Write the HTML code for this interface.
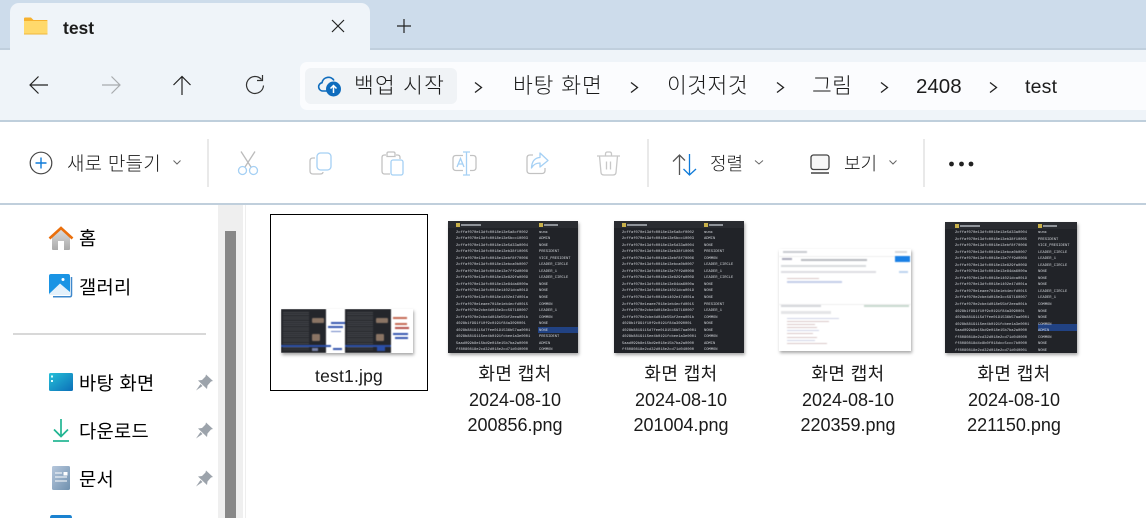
<!DOCTYPE html>
<html lang="ko"><head><meta charset="utf-8"><title>test</title>
<style>
html,body{margin:0;padding:0;width:1146px;height:518px;overflow:hidden;background:#fff}
body{position:relative;font-family:"Liberation Sans","Noto Sans CJK KR",sans-serif;color:#1a1a1a}
.a{position:absolute}
.t{position:absolute;white-space:nowrap;line-height:30px;height:30px}
.k{font-family:"Noto Sans CJK KR","Liberation Sans",sans-serif;font-weight:300}
.n{font-size:21.5px}
.b{font-size:18px}
.s{font-size:18.7px;color:#000;font-weight:400;letter-spacing:.3px}
.l{position:absolute;width:166px;text-align:center;font-size:18px;line-height:25.5px;color:#1a1a1a}
.l .k{font-weight:400;letter-spacing:.4px}
svg{position:absolute;overflow:visible}
.th{position:absolute;background:#212328;box-shadow:1px 2px 3px rgba(0,0,0,.35);overflow:hidden;width:130px;height:132px}
.th pre{position:absolute;margin:0;font:3.75px/6.55px "Liberation Mono",monospace;color:#d0d3d8;filter:blur(.35px)}
.th .hd{position:absolute;left:0;top:0;width:100%;height:7px;background:#2a2c31}
.th .hl{position:absolute;height:6.5px;background:#214283}
.th .i1,.th .i2{position:absolute;top:2px;width:3.5px;height:3.5px;background:#c8b04a}
.th .h1,.th .h2{position:absolute;top:3px;height:1.5px;background:#8f9399;filter:blur(.3px)}
</style></head><body>
<!-- tab strip -->
<div class="a" style="left:0;top:0;width:1146px;height:50px;background:#cddceb"></div>
<div class="a" style="left:0;top:48px;width:1146px;height:2px;background:#c0cfdd"></div>
<div class="a" style="left:10px;top:3px;width:360px;height:47px;background:#eff4f9;border-radius:9px 9px 0 0"></div>
<div class="a" style="left:0;top:50px;width:1146px;height:70px;background:#eff4f9"></div>
<div class="a" style="left:0;top:120px;width:1146px;height:2px;background:#bfcfdc"></div>
<svg style="left:24px;top:17px" width="24" height="18" viewBox="0 0 24 18"><path d="M0 1.500Q0 .5 1 .5H7L9.500 3H23Q23.500 3 23.500 4V6H0Z" fill="#f6b12e"/><path d="M0 4H23.500V16.500Q23.500 17.500 22.500 17.500H1Q0 17.500 0 16.500Z" fill="#ffd96b"/><path d="M0 17H23.500" stroke="#efb63c"/></svg>
<div class="t" style="left:63px;top:13px;font-size:17.500px;font-weight:700;color:#1c1c1c">test</div>
<svg style="left:330px;top:18px" width="16" height="16" fill="none" stroke="#222" stroke-width="1.200"><path d="M2 2L14 14M14 2L2 14"/></svg>
<svg style="left:396px;top:18px" width="16" height="16" fill="none" stroke="#222" stroke-width="1.200"><path d="M8 1V15M1 8H15"/></svg>
<!-- nav -->
<svg style="left:29px;top:75px" width="20" height="20" fill="none" stroke="#222" stroke-width="1.200"><path d="M1 10H19M9.500 1.500L1 10L9.500 18.500"/></svg>
<svg style="left:101px;top:75px" width="20" height="20" fill="none" stroke="#a8abae" stroke-width="1.200"><path d="M1 10H19M10.500 1.500L19 10L10.500 18.500"/></svg>
<svg style="left:172px;top:75px" width="20" height="20" fill="none" stroke="#222" stroke-width="1.200"><path d="M10 20V1.500M1.500 10L10 1.500L18.500 10"/></svg>
<svg style="left:245px;top:75px" width="20" height="21" fill="none" stroke="#333" stroke-width="1.200"><path d="M16.500 4.500A8.500 8.500 0 1 0 18.500 10.500M17.500 0V5.500H12"/></svg>
<div class="a" style="left:300px;top:62px;width:846px;height:48px;background:#fbfcfe;border-radius:7px 0 0 7px"></div>
<div class="a" style="left:305px;top:68px;width:152px;height:36px;background:#f0f3f6;border-radius:6px"></div>
<svg style="left:317px;top:74px" width="26" height="24" viewBox="0 0 26 24"><path d="M10 17H5.500A4.200 4.200 0 0 1 5 8.700A6.500 6.500 0 0 1 17 6.500" fill="none" stroke="#0f6cbd" stroke-width="1.600"/><circle cx="16.500" cy="15" r="7.500" fill="#0f6cbd"/><path d="M16.500 19V11.500M13.500 14.500L16.500 11.500L19.500 14.500" fill="none" stroke="#fff" stroke-width="1.500"/></svg>
<div class="t k n" style="left:354px;top:70px;letter-spacing:1.200px">백업 시작</div>
<div class="t k n" style="left:513px;top:70px;letter-spacing:.9px">바탕 화면</div>
<div class="t k n" style="left:667px;top:70px;letter-spacing:.5px">이것저것</div>
<div class="t k n" style="left:812px;top:70px;letter-spacing:.3px">그림</div>
<div class="t" style="left:916px;top:72px;font-size:20.500px;color:#1c1c1c">2408</div>
<div class="t" style="left:1025px;top:72px;font-size:19.500px;color:#1c1c1c;letter-spacing:.2px">test</div>
<svg style="left:0;top:0" width="1146" height="120" fill="none" stroke="#222" stroke-width="1.300"><path d="M475 82.500L481.500 87.500L475 92.500M631 82.500L637.500 87.500L631 92.500M777 82.500L783.500 87.500L777 92.500M881 82.500L887.500 87.500L881 92.500M990 82.500L996.500 87.500L990 92.500"/></svg>
<!-- toolbar -->
<svg style="left:29px;top:151px" width="24" height="24" fill="none"><circle cx="12" cy="12" r="10.800" stroke="#444" stroke-width="1.200"/><path d="M12 6.500V17.500M6.500 12H17.500" stroke="#0f7ad8" stroke-width="1.400"/></svg>
<div class="t k b" style="left:67px;top:148px;font-size:19px;letter-spacing:.2px">새로 만들기</div>
<svg style="left:0;top:0" width="1146" height="205" fill="none" stroke="#666" stroke-width="1"><path d="M173.500 160.500L177 164L180.500 160.500M755 160.500L759 164L763 160.500M889.500 160.500L893 164L896.500 160.500"/></svg>
<div class="a" style="left:207px;top:139px;width:2px;height:48px;background:#e9e9e9"></div>
<div class="a" style="left:647px;top:139px;width:2px;height:48px;background:#e9e9e9"></div>
<div class="a" style="left:923px;top:139px;width:2px;height:48px;background:#e9e9e9"></div>
<svg style="left:237px;top:151px" width="22" height="25" fill="none" stroke-width="1.300"><path d="M4 0.500L14 16M18 0.500L8 16" stroke="#bbb"/><circle cx="5.500" cy="19.500" r="4" stroke="#a5d0f4"/><circle cx="16.500" cy="19.500" r="4" stroke="#a5d0f4"/></svg>
<svg style="left:309px;top:152px" width="23" height="23" fill="none" stroke-width="1.300"><path d="M6 6H4Q1 6 1 9V19Q1 22 4 22H11Q14 22 14 20" stroke="#c2c2c2"/><rect x="8" y="1" width="14" height="17" rx="3.500" stroke="#a5d0f4"/></svg>
<svg style="left:381px;top:151px" width="23" height="25" fill="none" stroke-width="1.300"><path d="M5 4H3.500Q1 4 1 6.500V20Q1 23 3.500 23H9M15 4H16.500Q19 4 19 6.500V8M6 2.500Q6 1 7.500 1H12.500Q14 1 14 2.500V5.500H6Z" stroke="#c2c2c2"/><rect x="10" y="9" width="12" height="15" rx="2" stroke="#a5d0f4"/></svg>
<svg style="left:452px;top:151px" width="25" height="25" fill="none" stroke-width="1.300"><path d="M11 4.500H4Q1 4.500 1 7.500V16.500Q1 19.500 4 19.500H11M18 4.500H21Q24 4.500 24 7.500V16.500Q24 19.500 21 19.500H18" stroke="#c2c2c2"/><path d="M11 1H18M14.500 1V24M11 24H18M5 16L8.500 7.500L12 16M6 13H11" stroke="#a5d0f4"/></svg>
<svg style="left:526px;top:152px" width="23" height="23" fill="none" stroke-width="1.300"><path d="M7 3H4Q1 3 1 6V18.500Q1 21.500 4 21.500H16Q19 21.500 19 18.500V16" stroke="#c2c2c2"/><path d="M14 1L22 8.500L14 15V11Q8 11 5.500 16Q6 6 14 5.500Z" stroke="#a5d0f4" stroke-linejoin="round"/></svg>
<svg style="left:597px;top:151px" width="23" height="25" fill="none" stroke="#c8c8c8" stroke-width="1.300"><path d="M0 5H23M8.500 5V3Q8.500 1 10.500 1H12.500Q14.500 1 14.500 3V5M2.500 5L4 21.500Q4.300 24 7 24H16Q18.700 24 19 21.500L20.500 5M9.500 10.500V18.500M13.500 10.500V18.500"/></svg>
<svg style="left:672px;top:154px" width="26" height="22" fill="none" stroke-width="1.300"><path d="M7.500 21V1M1 7.500L7.500 1L13 6.500" stroke="#555"/><path d="M17.500 0V21M11.500 15L17.500 21L24 15" stroke="#0f7ad8"/></svg>
<div class="t k b" style="left:710px;top:148px">정렬</div>
<svg style="left:810px;top:154px" width="21" height="21" fill="none" stroke="#444" stroke-width="1.300"><rect x="1" y="1" width="18" height="14.500" rx="2.500" fill="#f7f7f7"/><path d="M1 19H19" stroke-width="1.600"/></svg>
<div class="t k b" style="left:844px;top:148px">보기</div>
<svg style="left:949px;top:160px" width="25" height="8" fill="#222"><circle cx="2.500" cy="4" r="2.400"/><circle cx="12.500" cy="4" r="2.400"/><circle cx="22" cy="4" r="2.400"/></svg>
<div class="a" style="left:0;top:203px;width:1146px;height:2px;background:#c0cfdc"></div>
<!-- sidebar -->
<div class="a" style="left:218px;top:205px;width:25px;height:313px;background:#efefef"></div>
<div class="a" style="left:225px;top:231px;width:11px;height:287px;background:#888"></div>
<div class="a" style="left:245px;top:205px;width:1px;height:313px;background:#eee"></div>
<div class="a" style="left:13px;top:333px;width:193px;height:2px;background:#d8d8d8"></div>
<svg style="left:48px;top:226px" width="26" height="25" viewBox="0 0 26 25"><defs><linearGradient id="h" x1="0" y1="0" x2="0" y2="1"><stop offset="0" stop-color="#dcdcdc"/><stop offset="1" stop-color="#aaa"/></linearGradient></defs><path d="M4 11L13 3L22 11V23Q22 24 21 24H16V15H10V24H5Q4 24 4 23Z" fill="url(#h)"/><path d="M1.500 12.500L13 2L24.500 12.500" fill="none" stroke="#ea6f0c" stroke-width="2.600"/></svg>
<svg style="left:49px;top:274px" width="25" height="24" viewBox="0 0 25 24"><rect x="0" y="0" width="21" height="21" rx="2" fill="#1a94e4"/><path d="M0 20L11 9.500L21 18V21H0Z" fill="#e4f1fb"/><circle cx="14" cy="5.500" r="1.500" fill="#fff"/><path d="M22.500 3V21Q22.500 22.800 21 22.800H4" fill="none" stroke="#3f88cc" stroke-width="1.500"/></svg>
<svg style="left:49px;top:373px" width="24" height="19" viewBox="0 0 24 19"><defs><linearGradient id="d" x1="0" y1="0" x2="1" y2="1"><stop offset="0" stop-color="#26c0d8"/><stop offset="1" stop-color="#0c6fb8"/></linearGradient></defs><rect width="24" height="18" rx="1.500" fill="url(#d)"/><rect x="2" y="2.500" width="2" height="2" fill="#dff"/><rect x="2" y="7" width="2" height="2" fill="#dff"/></svg>
<svg style="left:52px;top:419px" width="18" height="23" fill="none" stroke="#21b592" stroke-width="1.700"><path d="M9 0V17M2 10.500L9 17.500L16 10.500"/><path d="M1 22H17"/></svg>
<svg style="left:52px;top:466px" width="18" height="24" viewBox="0 0 18 24"><defs><linearGradient id="f" x1="0" y1="0" x2="1" y2="1"><stop offset="0" stop-color="#b6c7dc"/><stop offset="1" stop-color="#6f90ae"/></linearGradient></defs><rect width="18" height="24" rx="1.500" fill="url(#f)"/><path d="M3 7H10M3 11H15M3 15H15" stroke="#fff" stroke-width="1.100"/><rect x="11.500" y="6" width="4" height="3.500" fill="#fff"/></svg>
<svg style="left:50px;top:515px" width="22" height="4"><path d="M0 3Q0 0 2 0H20Q22 0 22 3Z" fill="#1a82d0"/></svg>
<div class="t k s" style="left:79px;top:223px">홈</div>
<div class="t k s" style="left:79px;top:272px">갤러리</div>
<div class="t k s" style="left:79px;top:368px">바탕 화면</div>
<div class="t k s" style="left:79px;top:416px">다운로드</div>
<div class="t k s" style="left:79px;top:464px">문서</div>
<svg style="left:196px;top:374px" width="17" height="17" viewBox="0 0 17 17" fill="#9ca3ab"><path d="M10 0.500L17 7L15 7.500L11.500 11.500L11 15L2 6.500L6 6L9.500 2.500Z M4.500 10L0 16.500L6.500 12Z"/></svg>
<svg style="left:196px;top:422px" width="17" height="17" viewBox="0 0 17 17" fill="#9ca3ab"><path d="M10 0.500L17 7L15 7.500L11.500 11.500L11 15L2 6.500L6 6L9.500 2.500Z M4.500 10L0 16.500L6.500 12Z"/></svg>
<svg style="left:196px;top:470px" width="17" height="17" viewBox="0 0 17 17" fill="#9ca3ab"><path d="M10 0.500L17 7L15 7.500L11.500 11.500L11 15L2 6.500L6 6L9.500 2.500Z M4.500 10L0 16.500L6.500 12Z"/></svg>
<!-- selected item -->
<div class="a" style="left:270px;top:214px;width:156px;height:175px;border:1px solid #000"></div>
<div class="a" style="left:281px;top:309px;width:132px;height:44px;background:#fff;box-shadow:1px 2px 3px rgba(0,0,0,.35);overflow:hidden">
<div style="position:absolute;left:0;top:0;width:132px;height:44px;filter:blur(.5px)">
<div class="a" style="left:0;top:0;width:45px;height:44px;background:#24262b"></div>
<div class="a" style="left:64px;top:0;width:46px;height:44px;background:#24262b"></div>
<div class="a" style="left:2px;top:3px;width:26px;height:38px;background:repeating-linear-gradient(#6e7074 0 1px,#2a2b30 1px 2.200px);opacity:.45"></div>
<div class="a" style="left:66px;top:3px;width:26px;height:38px;background:repeating-linear-gradient(#6e7074 0 1px,#2a2b30 1px 2.200px);opacity:.45"></div>
<div class="a" style="left:31px;top:9px;width:12px;height:5px;background:#8a7464;border-radius:1px"></div>
<div class="a" style="left:31px;top:25px;width:8px;height:7px;background:#8a7464;border-radius:1px"></div>
<div class="a" style="left:95px;top:9px;width:12px;height:5px;background:#8a7464;border-radius:1px"></div>
<div class="a" style="left:95px;top:25px;width:8px;height:7px;background:#8a7464;border-radius:1px"></div>
<div class="a" style="left:0;top:36px;width:50px;height:2px;background:#2b4fa8"></div>
<div class="a" style="left:64px;top:36px;width:46px;height:2px;background:#2b4fa8"></div>
<div class="a" style="left:96px;top:38px;width:8px;height:4px;background:#2b4fa8"></div>
<div class="a" style="left:31px;top:39px;width:6px;height:3px;background:#7a83a8"></div>
<div class="a" style="left:50px;top:13px;width:14px;height:2px;background:#3757b0"></div>
<div class="a" style="left:47px;top:17px;width:15px;height:2px;background:#3757b0"></div>
<div class="a" style="left:50px;top:22px;width:10px;height:1px;background:#6b82c5"></div>
<div class="a" style="left:52px;top:39px;width:9px;height:2px;background:#3757b0"></div>
<div class="a" style="left:112px;top:8px;width:14px;height:2px;background:#c56a55"></div>
<div class="a" style="left:114px;top:14px;width:12px;height:2px;background:#c56a55"></div>
<div class="a" style="left:114px;top:18px;width:14px;height:2px;background:#b5514a"></div>
<div class="a" style="left:112px;top:24px;width:15px;height:2px;background:#3757b0"></div>
<div class="a" style="left:114px;top:28px;width:13px;height:2px;background:#3757b0"></div>
</div></div>
<div class="l" style="left:266px;top:364px;font-size:17.500px;letter-spacing:.2px">test1.jpg</div>
<!-- thumb 2 -->
<div class="th" style="left:448px;top:221px"><div class="hd"></div><div class="i1" style="left:8px"></div><div class="h1" style="left:13px;width:20px"></div><div class="i2" style="left:91px"></div><div class="h2" style="left:96px;width:14px"></div><div class="hl" style="left:90px;top:105.500px;width:40px"></div>
<pre style="left:8px;top:8.500px">2cffaf070e13dfc0018e13e5a8cf0002
2cffaf070e13dfc0018e13e5bcc10003
2cffaf070e13dfc0018e13e5d33a0004
2cffaf070e13dfc0018e13eb38f10005
2cffaf070e13dfc0018e13ebf8f70006
2cffaf070e13dfc0018e13ebca0b0007
2cffaf070e13dfc0018e13e7ff9d0008
2cffaf070e13dfc0018e13e829fa0009
2cffaf070e13dfc0018e13e84da6000a
2cffaf070e13dfc0018e14021dca0019
2cffaf070e13dfc0018e1402e47d001a
2cffaf070e1eaee7018e1eb4ecfd0015
2cffaf070e2cbe4d018e3cc597160007
2cffaf070e2cbe4d018e55bf2eea001b
4028b1f991f10f9c0191f84a3090001
4028b8819115d7fee0191536b57aa0001
4028b8819115ee4b0191fcbee1a3e0001
5aad099b8e15bd9e018e15b7ba2a0000
ff8080818e2cd32d018e2cd71d040000</pre>
<pre style="left:91px;top:8.500px">NONE
ADMIN
NONE
PRESIDENT
VICE_PRESIDENT
LEADER_CIRCLE
LEADER_1
LEADER_CIRCLE
NONE
NONE
NONE
COMMON
LEADER_1
COMMON
NONE
NONE
PRESIDENT
ADMIN
COMMON</pre></div>
<!-- thumb 3 -->
<div class="th" style="left:614px;top:221px"><div class="hd"></div><div class="i1" style="left:8px"></div><div class="h1" style="left:13px;width:20px"></div><div class="i2" style="left:90px"></div><div class="h2" style="left:95px;width:14px"></div>
<pre style="left:8px;top:8.500px">2cffaf070e13dfc0018e13e5a8cf0002
2cffaf070e13dfc0018e13e5bcc10003
2cffaf070e13dfc0018e13e5d33a0004
2cffaf070e13dfc0018e13eb38f10005
2cffaf070e13dfc0018e13ebf8f70006
2cffaf070e13dfc0018e13ebca0b0007
2cffaf070e13dfc0018e13e7ff9d0008
2cffaf070e13dfc0018e13e829fa0009
2cffaf070e13dfc0018e13e84da6000a
2cffaf070e13dfc0018e14021dca0019
2cffaf070e13dfc0018e1402e47d001a
2cffaf070e1eaee7018e1eb4ecfd0015
2cffaf070e2cbe4d018e3cc597160007
2cffaf070e2cbe4d018e55bf2eea001b
4028b1f991f10f9c0191f84a3090001
4028b8819115d7fee0191536b57aa0001
4028b8819115ee4b0191fcbee1a3e0001
5aad099b8e15bd9e018e15b7ba2a0000
ff8080818e2cd32d018e2cd71d040000</pre>
<pre style="left:90px;top:8.500px">NONE
ADMIN
NONE
PRESIDENT
COMMON
LEADER_CIRCLE
LEADER_1
LEADER_CIRCLE
NONE
NONE
NONE
PRESIDENT
LEADER_1
COMMON
NONE
NONE
COMMON
ADMIN
COMMON</pre></div>
<!-- thumb 4 -->
<div class="a" style="left:779px;top:249px;width:132px;height:102px;background:#fff;box-shadow:1px 2px 3px rgba(0,0,0,.35);overflow:hidden">
<div style="position:absolute;left:0;top:0;width:132px;height:102px;filter:blur(.4px)">
<div class="a" style="left:4px;top:2px;width:24px;height:2px;background:#c9ccd1"></div>
<div class="a" style="left:116px;top:2px;width:12px;height:2px;background:#d5d7da"></div>
<div class="a" style="left:0;top:7px;width:132px;height:1px;background:#eee"></div>
<div class="a" style="left:3px;top:9px;width:10px;height:2px;background:#aab"></div>
<div class="a" style="left:22px;top:10px;width:66px;height:2px;background:#b8bbc0"></div>
<div class="a" style="left:116px;top:7px;width:15px;height:6px;background:#1a80e5"></div>
<div class="a" style="left:2px;top:16px;width:85px;height:2px;background:#d8dade"></div>
<div class="a" style="left:2px;top:22px;width:95px;height:2px;background:#dcdee2"></div>
<div class="a" style="left:120px;top:22px;width:9px;height:2px;background:#bcd4ef"></div>
<div class="a" style="left:8px;top:29px;width:32px;height:1px;background:#d9c7c7"></div>
<div class="a" style="left:8px;top:32px;width:55px;height:2px;background:#c4cde8"></div>
<div class="a" style="left:0;top:55px;width:132px;height:1px;background:#eee"></div>
<div class="a" style="left:2px;top:56px;width:40px;height:2px;background:#d5d7db"></div>
<div class="a" style="left:85px;top:56px;width:45px;height:2px;background:#c9d9cf"></div>
<div class="a" style="left:2px;top:62px;width:50px;height:3px;background:#e4e5e7"></div>
<div class="a" style="left:8px;top:69px;width:52px;height:1px;background:#cfd3e6"></div>
<div class="a" style="left:8px;top:72px;width:42px;height:1px;background:#d9c7c7"></div>
<div class="a" style="left:8px;top:75px;width:28px;height:1px;background:#d9c7c7"></div>
<div class="a" style="left:8px;top:78px;width:30px;height:1px;background:#d9c7c7"></div>
<div class="a" style="left:8px;top:81px;width:32px;height:1px;background:#cfd3e6"></div>
<div class="a" style="left:8px;top:84px;width:26px;height:1px;background:#d9c7c7"></div>
<div class="a" style="left:8px;top:88px;width:30px;height:1px;background:#d9c7c7"></div>
<div class="a" style="left:8px;top:91px;width:28px;height:1px;background:#cfd3e6"></div>
<div class="a" style="left:8px;top:94px;width:40px;height:1px;background:#d9c7c7"></div>
</div></div>
<!-- thumb 5 -->
<div class="th" style="left:945px;top:222px;width:132px;height:131px"><div class="hd"></div><div class="i1" style="left:10px"></div><div class="h1" style="left:15px;width:20px"></div><div class="i2" style="left:93px"></div><div class="h2" style="left:98px;width:14px"></div><div class="hl" style="left:93px;top:102px;width:39px"></div>
<pre style="left:10px;top:8px">2cffaf070e13dfc0018e13e5d33a0004
2cffaf070e13dfc0018e13eb38f10005
2cffaf070e13dfc0018e13ebf8f70006
2cffaf070e13dfc0018e13ebca0b0007
2cffaf070e13dfc0018e13e7ff9d0008
2cffaf070e13dfc0018e13e829fa0009
2cffaf070e13dfc0018e13e84da6000a
2cffaf070e13dfc0018e14021dca0019
2cffaf070e13dfc0018e1402e47d001a
2cffaf070e1eaee7018e1eb4ecfd0015
2cffaf070e2cbe4d018e3cc597160007
2cffaf070e2cbe4d018e55bf2eea001b
4028b1f991f10f9c0191f84a3090001
4028b8819115d7fee0191536b57aa0001
4028b8819115ee4b0191fcbee1a3e0001
5aad099b8e15bd9e018e15b7ba2a0000
ff8080818e2cd32d018e2cd71d040000
ff8080818d4c8b0f018dcc5ccc7b0000
ff8080818e2cd32d018e2cd71d040001</pre>
<pre style="left:93px;top:8px">NONE
PRESIDENT
VICE_PRESIDENT
LEADER_CIRCLE
LEADER_1
LEADER_CIRCLE
NONE
NONE
NONE
LEADER_CIRCLE
LEADER_1
COMMON
NONE
NONE
COMMON
ADMIN
COMMON
NONE
NONE</pre></div>
<!-- labels -->
<div class="l" style="left:432px;top:361px"><span class="k">화면 캡처</span><br>2024-08-10<br>200856.png</div>
<div class="l" style="left:598px;top:361px"><span class="k">화면 캡처</span><br>2024-08-10<br>201004.png</div>
<div class="l" style="left:765px;top:361px"><span class="k">화면 캡처</span><br>2024-08-10<br>220359.png</div>
<div class="l" style="left:931px;top:361px"><span class="k">화면 캡처</span><br>2024-08-10<br>221150.png</div>
</body></html>
